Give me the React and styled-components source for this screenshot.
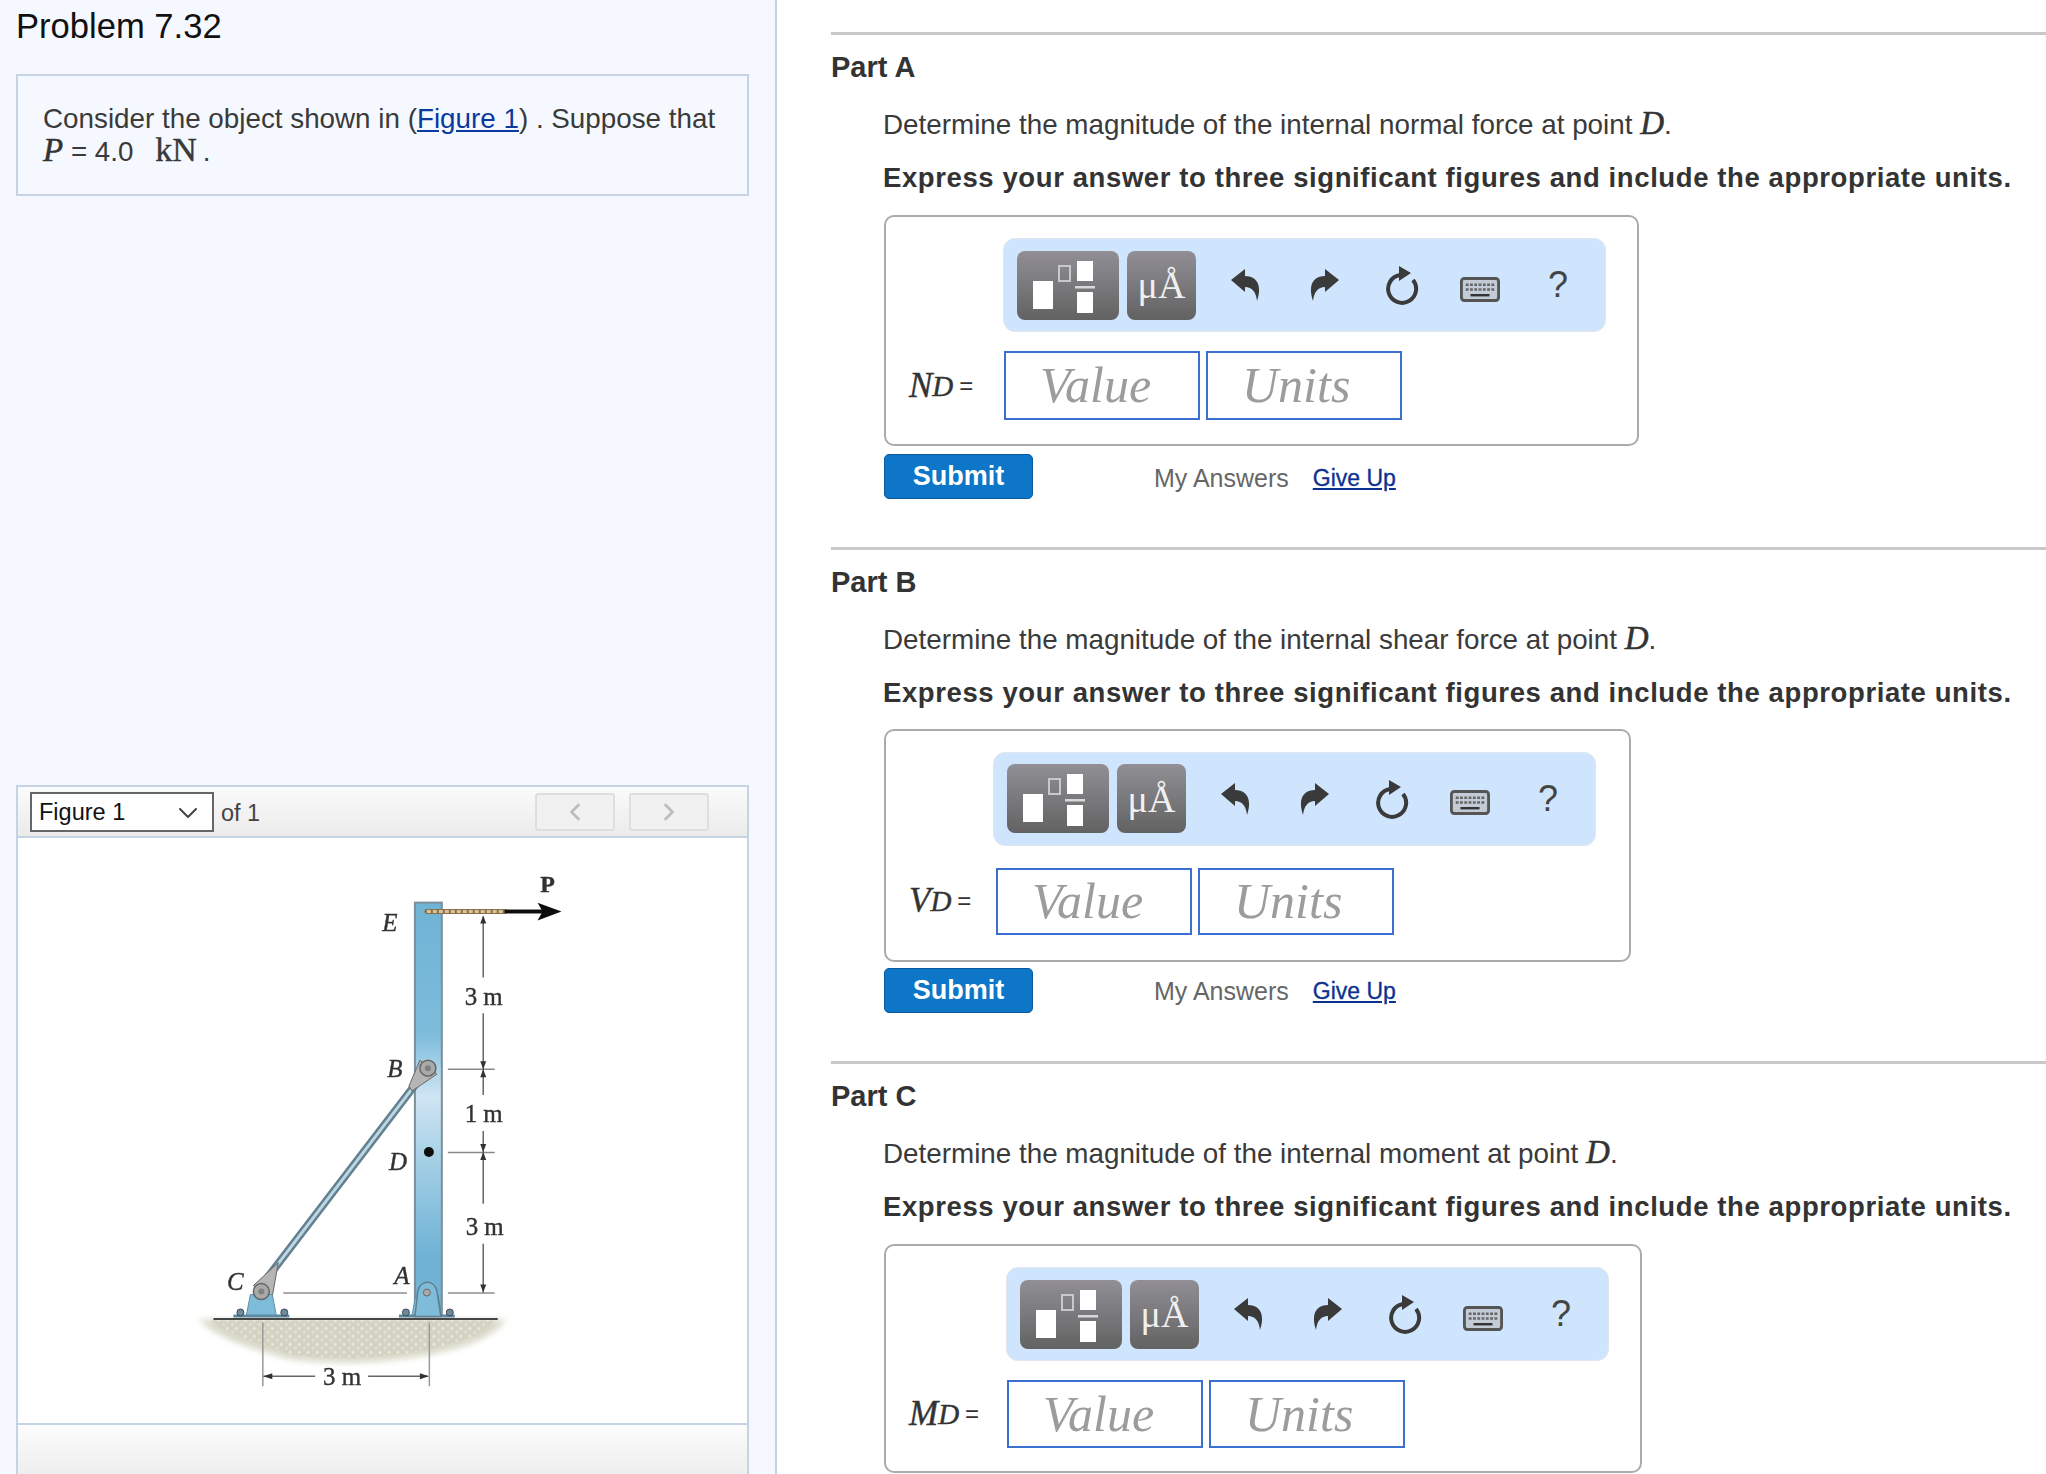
import styled, { createGlobalStyle } from 'styled-components';
import { ChevronDown, ChevronLeft, ChevronRight } from 'lucide-react';

const GlobalStyle = createGlobalStyle`
  html, body {
    margin: 0;
    padding: 0;
    height: 1474px;
    overflow: hidden;
    background: white;
    font-family: 'Liberation Sans', Arial, sans-serif;
    color: #333;
  }
  * { box-sizing: border-box; }
`;

const Page = styled.div`
  display: flex;
  width: 2046px;
  height: 1474px;
  overflow: hidden;
`;

const Aside = styled.aside`
  flex: 0 0 777px;
  background: #f5f9ff;
  border-right: 2px solid #c3d1e4;
  padding: 0 26px 0 16px;
  display: flex;
  flex-direction: column;
`;

const Title = styled.h1`
  margin: 6px 0 0;
  font-size: 34.6px;
  line-height: 40px;
  font-weight: normal;
  color: #111;
`;

const Prompt = styled.div`
  margin-top: 28px;
  height: 122px;
  padding: 27px 20px 0 25px;
  border: 2px solid #c6d3e3;
  font-size: 27.8px;
  line-height: 31px;
  color: #3a3a3a;
`;

const FigureLink = styled.a`
  color: #0b3a9e;
  text-decoration: underline;
`;

const MathVar = styled.i`
  font-family: 'Liberation Serif', serif;
  font-size: 33px;
  color: #333;
  -webkit-text-stroke: 0.5px #333;
`;

const MathUnit = styled.span`
  font-family: 'Liberation Serif', serif;
  font-size: 34px;
  margin: 0 6px 0 14px;
  -webkit-text-stroke: 0.4px #333;
`;

const FigurePanel = styled.div`
  margin-top: 589px;
  flex: 1;
  border: 2px solid #c6d3e3;
  border-bottom: none;
  display: flex;
  flex-direction: column;
  background: white;
`;

const FigureBar = styled.div`
  height: 51px;
  flex: none;
  display: flex;
  align-items: center;
  padding: 0 38px 0 12px;
  background: linear-gradient(#fbfbfb, #ebebeb);
  border-bottom: 2px solid #c6d3e3;
  font-size: 23.5px;
  color: #444;
`;

const FigureSelect = styled.div`
  width: 184px;
  height: 40px;
  border: 2px solid #666;
  background: white;
  color: #111;
  display: flex;
  align-items: center;
  justify-content: space-between;
  padding: 2px 8px 0 7px;
  margin-right: 7px;
`;

const PageCount = styled.span`
  padding-top: 3px;
`;

const PagerButton = styled.div`
  width: 80px;
  height: 38px;
  margin-left: ${(p) => p.$gap}px;
  border: 2px solid #dedede;
  border-radius: 3px;
  background: #f1f1f1;
  color: #bdbdbd;
  display: flex;
  align-items: center;
  justify-content: center;
`;

const FigureBody = styled.div`
  height: 587px;
  flex: none;
  border-bottom: 2px solid #c6d3e3;
`;

const FigureFooter = styled.div`
  flex: 1;
  background: linear-gradient(#fcfcfc, #eeeeee);
`;

const Main = styled.main`
  flex: 1;
  padding: 32px 0 0 54px;
  min-width: 0;
`;

const Part = styled.section`
  height: 514.5px;
  border-top: 3px solid #c9c9c9;
  padding-top: 15px;
`;

const PartTitle = styled.h2`
  margin: 0;
  font-size: 29px;
  line-height: 34px;
  font-weight: bold;
  color: #333;
`;

const PartBody = styled.div`
  padding-left: 52px;
`;

const Question = styled.p`
  margin: 21px 0 0;
  font-size: 27.8px;
  line-height: 36px;
  color: #3a3a3a;
`;

const Instruction = styled.p`
  margin: 17px 0 0;
  font-size: 27.5px;
  line-height: 36px;
  font-weight: bold;
  letter-spacing: 0.6px;
  white-space: nowrap;
  color: #333;
`;

const AnswerBox = styled.div`
  width: ${(p) => p.$width}px;
  margin: ${(p) => p.$top}px 0 0 1px;
  padding: 21px 0 ${(p) => p.$bottom}px;
  border: 2px solid #ababab;
  border-radius: 10px;
  background: white;
`;

const Toolbar = styled.div`
  margin-left: ${(p) => p.$left}px;
  width: 603px;
  height: 94px;
  display: flex;
  align-items: center;
  padding-left: 13px;
  background: #cfe5fe;
  border: 1px solid #dfe6ee;
  border-radius: 12px;
`;

const DarkButton = styled.div`
  width: ${(p) => p.$width}px;
  height: 69px;
  margin-right: 8px;
  border-radius: 8px;
  background: linear-gradient(#918f95, #626262);
  display: flex;
  align-items: center;
  justify-content: center;
  color: #f0f0f0;
  font-family: 'Liberation Serif', serif;
  font-size: 38px;
`;

const ToolIcon = styled.div`
  width: 78px;
  height: 69px;
  display: flex;
  align-items: center;
  justify-content: center;
  padding-top: ${(p) => p.$drop || 0}px;
  color: #3a3a3a;
`;

const ToolSpacer = styled.div`
  width: 3px;
`;

const HelpMark = styled.span`
  font-size: 36px;
  color: #444;
`;

const InputRow = styled.div`
  display: flex;
  margin-top: ${(p) => p.$gap}px;
`;

const InputLabel = styled.div`
  width: ${(p) => p.$width}px;
  padding-left: 23px;
  display: flex;
  align-items: center;
  font-size: 24px;
  color: #333;
`;

const LabelVar = styled.i`
  font-family: 'Liberation Serif', serif;
  font-size: 35px;
  -webkit-text-stroke: 0.4px #333;
`;

const LabelSub = styled.sub`
  font-family: 'Liberation Serif', serif;
  font-style: italic;
  font-size: 29px;
  vertical-align: -6px;
  line-height: 0;
  margin-right: 6px;
  -webkit-text-stroke: 0.4px #333;
`;

const AnswerField = styled.div`
  width: 196px;
  height: ${(p) => p.$height}px;
  margin-right: 6px;
  padding-left: 34px;
  border: 2px solid #3c6fd0;
  background: white;
  font-family: 'Liberation Serif', serif;
  font-style: italic;
  font-size: 50px;
  line-height: ${(p) => p.$height - 4}px;
  color: #9c9c9c;
`;

const ActionRow = styled.div`
  display: flex;
  align-items: center;
  margin: ${(p) => p.$gap}px 0 0 1px;
`;

const SubmitButton = styled.button`
  width: 149px;
  height: 45px;
  border: 1px solid #0a5a9c;
  border-radius: 5px;
  background: #0d76c8;
  color: white;
  font-family: inherit;
  font-size: 27px;
  font-weight: bold;
  padding: 0;
`;

const MyAnswers = styled.span`
  margin-left: 121px;
  padding-top: 3px;
  font-size: 25px;
  color: #666;
`;

const GiveUp = styled.a`
  margin-left: 24px;
  padding-top: 3px;
  font-size: 23px;
  -webkit-text-stroke: 0.3px #0b3190;
  color: #0b3190;
  text-decoration: underline;
`;

const UndoIcon = ({ flip }) => (
  <svg width="32" height="34" viewBox="0 0 32 34" style={flip ? { transform: 'scaleX(-1)' } : undefined}>
    <path d="M1 12 L15 1 V8 C25 8 33 15 27 33 C26 24 22 19 15 19 V24 Z" fill="currentColor" />
  </svg>
);

const ResetIcon = () => (
  <svg width="36" height="40" viewBox="0 0 36 40">
    <path d="M16 10 A14 14 0 1 0 29 15" fill="none" stroke="currentColor" strokeWidth="4" />
    <path d="M15 1 L27 8 L15 16 Z" fill="currentColor" />
  </svg>
);

const KeyboardIcon = () => (
  <svg width="40" height="25" viewBox="0 0 42 26">
    <rect x="1.5" y="1.5" width="39" height="23" rx="3" fill="#c3ccd6" stroke="#555" strokeWidth="3" />
    <path d="M6 8 H36 M6 13 H36" stroke="#666" strokeWidth="2.5" strokeDasharray="3 1.5" />
    <path d="M11 19 H31" stroke="#333" strokeWidth="2.5" />
  </svg>
);

const TemplateIcon = () => (
  <svg width="102" height="69" viewBox="0 0 102 69">
    <rect x="16" y="30" width="20" height="28" fill="white" />
    <rect x="42" y="15" width="11" height="15" fill="none" stroke="#c9c9c9" strokeWidth="2" />
    <rect x="60" y="10" width="16" height="20" fill="white" />
    <rect x="58" y="35" width="20" height="2.5" fill="#d8d8d8" />
    <rect x="60" y="41" width="16" height="21" fill="white" />
  </svg>
);

const labelFont = { fontFamily: "'Liberation Serif', serif", fill: '#333', stroke: '#333', strokeWidth: 0.4 };

const FigureLabel = ({ x, y, children, italic = true, bold = false, size = 25 }) => (
  <text x={x} y={y} textAnchor="middle" fontSize={size} fontStyle={italic ? 'italic' : 'normal'} fontWeight={bold ? 'bold' : 'normal'} style={labelFont}>
    {children}
  </text>
);

const Pin = ({ x, y }) => (
  <g>
    <circle cx={x} cy={y} r="8" fill="#a9a9a9" stroke="#666" strokeWidth="1.5" />
    <circle cx={x} cy={y} r="3" fill="#808080" />
  </g>
);

const Base = ({ x }) => (
  <g>
    <path d={`M${x - 11} 1296 L${x + 11} 1296 L${x + 15} 1317 L${x - 15} 1317 Z`} fill="#7fbcd9" stroke="#5f8ea5" />
    <rect x={x - 28} y="1316" width="56" height="3" fill="#5c8aa0" />
    <circle cx={x - 21} cy="1314" r="3.5" fill="#6a8c9c" stroke="#445" />
    <circle cx={x + 23} cy="1314" r="3.5" fill="#6a8c9c" stroke="#445" />
  </g>
);

// the beam drawing, in page coordinates
const BeamFigure = () => (
  <svg width="100%" height="585" viewBox="17 839 731 585">
    <defs>
      <linearGradient id="beamFill" x1="0" y1="0" x2="0" y2="1">
        <stop offset="0" stopColor="#6fb3d5" />
        <stop offset="0.32" stopColor="#7dbcdb" />
        <stop offset="0.47" stopColor="#cfe5f3" />
        <stop offset="0.62" stopColor="#a6d0e6" />
        <stop offset="0.85" stopColor="#6fb3d5" />
        <stop offset="1" stopColor="#6fb3d5" />
      </linearGradient>
      <pattern id="gravel" width="9" height="8" patternUnits="userSpaceOnUse">
        <rect width="9" height="8" fill="#d2d2c2" />
        <circle cx="2" cy="2" r="1.7" fill="#e8e8dc" />
        <circle cx="7" cy="6" r="1.7" fill="#e2e2d4" />
      </pattern>
      <filter id="soft"><feGaussianBlur stdDeviation="3" /></filter>
      <filter id="slight"><feGaussianBlur stdDeviation="0.45" /></filter>
    </defs>
    <path d="M198 1321 H506 C494 1340 462 1350 430 1356 C380 1366 320 1366 285 1360 C255 1350 222 1344 198 1321 Z" fill="#d8d8c8" filter="url(#soft)" />
    <path d="M210 1322 H494 C484 1338 455 1344 428 1351 C380 1361 320 1361 288 1355 C262 1346 232 1338 210 1322 Z" fill="url(#gravel)" filter="url(#slight)" />
    <g filter="url(#slight)">
      <rect x="415" y="903" width="27" height="414" fill="url(#beamFill)" stroke="#7d8f99" strokeWidth="2" />
      <path d="M258 1291 L428 1069" stroke="#62808f" strokeWidth="8" />
      <path d="M258 1291 L428 1069" stroke="#bcd6e2" strokeWidth="3" />
      <path d="M253 1287 L278 1264 L272 1298 Z" fill="#b5b5b5" stroke="#666" />
      <path d="M420 1061 L437 1075 L412 1092 L409 1087 Z" fill="#b5b5b5" stroke="#666" />
      <Pin x={428} y={1069} />
      <Base x={261} />
      <Base x={427} />
      <path d="M415 1318 L418 1292 A10 12 0 0 1 437 1292 L441 1318 Z" fill="#7fbcd9" stroke="#5f7f90" strokeWidth="1.5" />
      <circle cx="427" cy="1294" r="3.5" fill="#aaa" stroke="#666" />
      <Pin x={261} y={1293} />
      <circle cx="429" cy="1153" r="5" fill="#111" />

      <path d="M213 1320.5 H498" stroke="#444" strokeWidth="2" />
      <path d="M283 1294.5 H407 M448 1294.5 H495" stroke="#aaa" strokeWidth="2" />
      <path d="M448 1070 H495 M448 1153.5 H495" stroke="#888" strokeWidth="1.5" />
      <path d="M483.5 917 V978 M483.5 1014 V1096 M483.5 1132 V1205 M483.5 1245 V1294" stroke="#666" strokeWidth="1.5" />
      <path d="M483.5 916 l-3 8 h6 Z M483.5 1070 l-3 -8 h6 Z M483.5 1070 l-3 8 h6 Z M483.5 1153 l-3 -8 h6 Z M483.5 1153 l-3 8 h6 Z M483.5 1294 l-3 -8 h6 Z" fill="#333" />
      <path d="M262.5 1324 V1388 M429.5 1324 V1388" stroke="#999" strokeWidth="1.5" />
      <path d="M263 1378 H315 M368 1378 H428" stroke="#666" strokeWidth="1.5" />
      <path d="M263 1378 l9 -3 v6 Z M429 1378 l-9 -3 v6 Z" fill="#333" />

      <path d="M427 912 H505" stroke="#8a6f4a" strokeWidth="5" strokeLinecap="round" />
      <path d="M427 912 H505" stroke="#d9c39d" strokeWidth="3" strokeDasharray="4 2" />
      <path d="M505 912 H545" stroke="#111" strokeWidth="4" />
      <path d="M562 912 L538 903 L543 912 L538 921 Z" fill="#111" />

      <FigureLabel x={548} y={892} italic={false} bold size={24}>P</FigureLabel>
      <FigureLabel x={390} y={931}>E</FigureLabel>
      <FigureLabel x={395} y={1078}>B</FigureLabel>
      <FigureLabel x={398} y={1171}>D</FigureLabel>
      <FigureLabel x={402} y={1285}>A</FigureLabel>
      <FigureLabel x={235} y={1291}>C</FigureLabel>
      <FigureLabel x={484} y={1006} italic={false}>3 m</FigureLabel>
      <FigureLabel x={484} y={1123} italic={false}>1 m</FigureLabel>
      <FigureLabel x={485} y={1236} italic={false}>3 m</FigureLabel>
      <FigureLabel x={342} y={1387} italic={false}>3 m</FigureLabel>
    </g>
  </svg>
);

const parts = [
  { name: 'Part A', what: 'normal force', symbol: 'N', width: 755, left: 117, label: 118, top: 19, rowGap: 19, field: 69, bottom: 24, actionGap: 8, actions: true },
  { name: 'Part B', what: 'shear force', symbol: 'V', width: 747, left: 107, label: 110, top: 18, rowGap: 22, field: 67, bottom: 25, actionGap: 6, actions: true },
  { name: 'Part C', what: 'moment', symbol: 'M', width: 758, left: 120, label: 121, top: 19, rowGap: 19, field: 68, bottom: 23, actionGap: 8, actions: false },
];

const App = () => (
  <Page>
    <GlobalStyle />
    <Aside>
      <Title>Problem 7.32</Title>
      <Prompt>
        Consider the object shown in (<FigureLink href="#">Figure 1</FigureLink>) . Suppose that
        <br />
        <MathVar>P</MathVar> = 4.0 <MathUnit>kN</MathUnit>.
      </Prompt>
      <FigurePanel>
        <FigureBar>
          <FigureSelect>
            Figure 1
            <ChevronDown size={32} strokeWidth={1.5} color="#444" />
          </FigureSelect>
          <PageCount>of 1</PageCount>
          <PagerButton $gap={275}><ChevronLeft size={28} strokeWidth={2.4} /></PagerButton>
          <PagerButton $gap={14}><ChevronRight size={28} strokeWidth={2.4} /></PagerButton>
        </FigureBar>
        <FigureBody><BeamFigure /></FigureBody>
        <FigureFooter />
      </FigurePanel>
    </Aside>
    <Main>
      {parts.map((part) => (
        <Part key={part.name}>
          <PartTitle>{part.name}</PartTitle>
          <PartBody>
            <Question>
              Determine the magnitude of the internal {part.what} at point <MathVar>D</MathVar>.
            </Question>
            <Instruction>Express your answer to three significant figures and include the appropriate units.</Instruction>
            <AnswerBox $width={part.width} $top={part.top} $bottom={part.bottom}>
              <Toolbar $left={part.left}>
                <DarkButton $width={102}><TemplateIcon /></DarkButton>
                <DarkButton $width={69}>μÅ</DarkButton>
                <ToolSpacer />
                <ToolIcon><UndoIcon /></ToolIcon>
                <ToolIcon><UndoIcon flip /></ToolIcon>
                <ToolIcon><ResetIcon /></ToolIcon>
                <ToolIcon $drop={8}><KeyboardIcon /></ToolIcon>
                <ToolIcon><HelpMark>?</HelpMark></ToolIcon>
              </Toolbar>
              <InputRow $gap={part.rowGap}>
                <InputLabel $width={part.label}>
                  <LabelVar>{part.symbol}</LabelVar>
                  <LabelSub>D</LabelSub>=
                </InputLabel>
                <AnswerField $height={part.field}>Value</AnswerField>
                <AnswerField $height={part.field}>Units</AnswerField>
              </InputRow>
            </AnswerBox>
            {part.actions && (
              <ActionRow $gap={part.actionGap}>
                <SubmitButton>Submit</SubmitButton>
                <MyAnswers>My Answers</MyAnswers>
                <GiveUp href="#">Give Up</GiveUp>
              </ActionRow>
            )}
          </PartBody>
        </Part>
      ))}
    </Main>
  </Page>
);

export default App;
